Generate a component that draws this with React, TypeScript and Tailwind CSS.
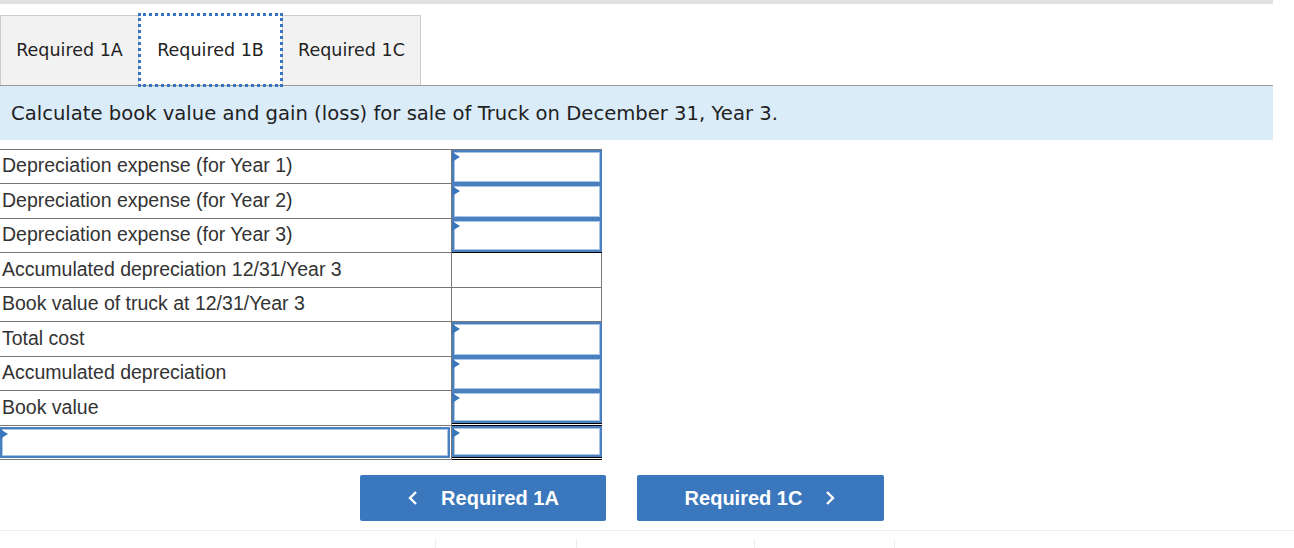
import React from 'react';

type Row = {
  label: string;
  input: boolean;
  labelInput?: boolean;
  under?: 'single' | 'double';
  h: string;
};

const rows: Row[] = [
  { label: 'Depreciation expense (for Year 1)', input: true, h: 'h-[34px]' },
  { label: 'Depreciation expense (for Year 2)', input: true, h: 'h-[35px]' },
  { label: 'Depreciation expense (for Year 3)', input: true, under: 'single', h: 'h-[34px]' },
  { label: 'Accumulated depreciation 12/31/Year 3', input: false, h: 'h-[35px]' },
  { label: 'Book value of truck at 12/31/Year 3', input: false, h: 'h-[34px]' },
  { label: 'Total cost', input: true, h: 'h-[35px]' },
  { label: 'Accumulated depreciation', input: true, h: 'h-[34px]' },
  { label: 'Book value', input: true, under: 'double', h: 'h-[35px]' },
  { label: '', input: true, labelInput: true, under: 'double', h: 'h-[34px]' },
];

function InputBox() {
  return (
    <div className="relative h-full w-full border-2 border-[#4a7fc0] bg-white shadow-[inset_0_0_0_1px_#a9c5e6]">
      <div className="absolute left-[-2px] top-0 h-0 w-0 border-y-[5px] border-l-[8px] border-y-transparent border-l-[#3b77bc]" />
    </div>
  );
}

function Tab({ text, active }: { text: string; active?: boolean }) {
  if (active) {
    return (
      <div className="relative z-10 mx-[1px] flex h-[70px] w-[141px] items-center justify-center bg-white outline-[3px] outline-dotted outline-[#3574c0] outline-offset-[-1px]">
        <span>{text}</span>
      </div>
    );
  }
  return (
    <div className="flex h-[70px] w-[139px] items-center justify-center border border-b-0 border-[#cccccc] bg-[#f2f2f2]">
      <span>{text}</span>
    </div>
  );
}

export default function App() {
  return (
    <div className="relative h-[548px] w-[1294px] overflow-hidden bg-white">
      <div className="h-[4px] w-[1273px] bg-[#e0e0e0]" />

      {/* tabs */}
      <div className="mt-[11px] flex h-[70px] font-['DejaVu_Sans',Verdana,sans-serif] text-[17.5px] text-[#222]">
        <Tab text="Required 1A" />
        <Tab text="Required 1B" active />
        <Tab text="Required 1C" />
      </div>

      {/* instruction band */}
      <div className="flex h-[55px] w-[1273px] items-center border-t border-[#999999] bg-[#dbecf9] pl-[11px] pt-[1px] font-['DejaVu_Sans',Verdana,sans-serif] text-[19.6px] text-[#222]">
        Calculate book value and gain (loss) for sale of Truck on December 31, Year 3.
      </div>

      {/* table */}
      <div className="mt-[9px] w-[602px] border-t border-[#777777] font-['Liberation_Sans',Arial,sans-serif] text-[19.5px] text-[#333]">
        {rows.map((r, i) => (
          <div key={i} className={`flex ${r.h}`}>
            <div
              className={`w-[452px] border-r border-[#777777] ${
                r.labelInput ? 'border-b border-b-[#777777] py-[1px] pr-[1px]' : 'border-b border-[#777777] pl-[2px] flex items-center'
              }`}
            >
              {r.labelInput ? <InputBox /> : <span className="leading-none pb-[1px]">{r.label}</span>}
            </div>
            <div
              className={`w-[150px] ${
                r.under === 'double'
                  ? 'border-b-[3px] border-double border-black'
                  : r.under === 'single'
                  ? 'border-b border-black'
                  : r.input
                  ? ''
                  : 'border-b border-r border-[#777777]'
              }`}
            >
              {r.input ? <InputBox /> : null}
            </div>
          </div>
        ))}
      </div>

      {/* nav buttons */}
      <div className="mt-[15px] flex gap-[31px] pl-[360px] font-['Liberation_Sans',Arial,sans-serif] text-[20px] font-bold text-white">
        <button className="flex h-[46px] w-[246px] items-center justify-center gap-[22px] rounded-[2px] bg-[#3b77bc]">
          <svg width="12" height="16" viewBox="0 0 12 16" fill="none">
            <path d="M9 2 L3 8 L9 14" stroke="white" strokeWidth="2.4" />
          </svg>
          <span>Required 1A</span>
        </button>
        <button className="flex h-[46px] w-[247px] items-center justify-center gap-[22px] rounded-[2px] bg-[#3b77bc]">
          <span>Required 1C</span>
          <svg width="12" height="16" viewBox="0 0 12 16" fill="none">
            <path d="M3 2 L9 8 L3 14" stroke="white" strokeWidth="2.4" />
          </svg>
        </button>
      </div>

      {/* next section top border */}
      <div className="mt-[9px] h-[1px] w-full bg-[#eeeeee]" />
      <div className="mt-[8px] flex h-[10px]">
        <div className="w-[435px]" />
        <div className="w-[141px] border-l border-[#eeeeee]" />
        <div className="w-[178px] border-l border-[#eeeeee]" />
        <div className="w-[140px] border-l border-[#eeeeee]" />
        <div className="w-[100px] border-l border-[#eeeeee]" />
      </div>
    </div>
  );
}
